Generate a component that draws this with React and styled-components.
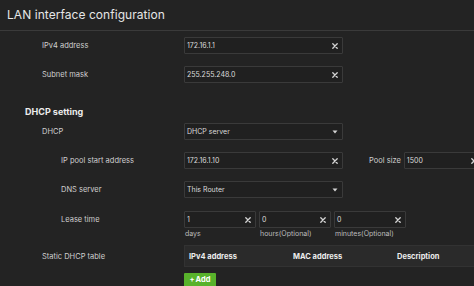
import React from "react";
import styled, { createGlobalStyle } from "styled-components";

const Global = createGlobalStyle`
  html, body { margin: 0; padding: 0; background: #232323; overflow: hidden; }
  body { font-family: "Inter", "Lato", sans-serif; color: #d6d6d6; }
  * { box-sizing: border-box; }
`;

const Page = styled.div`
  width: 474px;
  height: 286px;
  background: #232323;
  overflow: hidden;
`;

const Header = styled.div`
  height: 31px;
  border-bottom: 1px solid #3a3a3a;
  display: flex;
  align-items: center;
  padding: 0 0 2px 7px;
`;

const Title = styled.h1`
  margin: 0;
  font-size: 12px;
  font-weight: 400;
  color: #e6e6e6;
  letter-spacing: 0.05px;
`;

const Form = styled.div`
  display: flex;
  flex-direction: column;
  padding-top: 6px;
`;

const Row = styled.div`
  display: grid;
  grid-template-columns: 184px auto;
  align-items: start;
  margin-top: ${(p) => p.$mt || 0}px;
`;

const Label = styled.div`
  padding-left: ${(p) => (p.$indent ? 61 : 42)}px;
  height: ${(p) => p.$h || 17}px;
  display: flex;
  align-items: center;
  font-size: 7.5px;
  color: #cfcfcf;
  white-space: nowrap;
`;

const Section = styled.div`
  margin-top: 22px;
  padding-left: 25px;
  height: 13px;
  line-height: 13px;
  font-size: 9px;
  font-weight: 700;
  color: #ececec;
`;

const Fields = styled.div`
  display: flex;
  align-items: ${(p) => (p.$top ? "flex-start" : "center")};
  gap: ${(p) => p.$gap || 0}px;
`;

const Box = styled.div`
  width: ${(p) => p.$w}px;
  height: 17px;
  flex: none;
  border: 1px solid #3a3a3a;
  background: #202020;
  border-radius: 1px;
  display: flex;
  align-items: center;
  justify-content: space-between;
  padding: 0 4px 0 2px;
  font-size: 7px;
  color: #dcdcdc;
`;

const Field = styled.div`
  display: flex;
  flex-direction: column;
  gap: 1px;
`;

const Caption = styled.div`
  font-size: 7px;
  color: #bdbdbd;
  line-height: 9px;
  padding-left: 1px;
`;

const SideLabel = styled.span`
  font-size: 7.5px;
  color: #cfcfcf;
  white-space: nowrap;
  flex: none;
  margin-left: 26px;
  margin-right: 3px;
`;

const Table = styled.div`
  width: 320px;
`;

const THead = styled.div`
  display: grid;
  grid-template-columns: 104px 104px 1fr;
  height: 22px;
  align-items: center;
  background: #2a2a2a;
  border: 1px solid #323232;
  padding-left: 4px;
  font-size: 7.5px;
  font-weight: 700;
  color: #ededed;
`;

const AddButton = styled.button`
  margin-top: 6px;
  width: 32px;
  height: 16px;
  border: none;
  border-radius: 1px;
  background: #58b22b;
  color: #ffffff;
  font-family: inherit;
  font-size: 7.5px;
  font-weight: 700;
  padding: 0 0 3px;
  display: flex;
  align-items: center;
  justify-content: center;
  gap: 1px;
`;

const ClearIcon = () => (
  <svg width="6" height="6" viewBox="0 0 6 6">
    <path d="M0.8 0.8 L5.2 5.2 M5.2 0.8 L0.8 5.2" stroke="#d4d4d4" strokeWidth="1.3" strokeLinecap="round" />
  </svg>
);

const Caret = () => (
  <svg width="6" height="4" viewBox="0 0 6 4">
    <path d="M0.5 0.5 L5.5 0.5 L3 3.5 Z" fill="#d4d4d4" />
  </svg>
);

const TextInput = ({ value, w = 159 }) => (
  <Box $w={w}>
    <span>{value}</span>
    <ClearIcon />
  </Box>
);

const Select = ({ value }) => (
  <Box $w={159}>
    <span>{value}</span>
    <Caret />
  </Box>
);

export default function App() {
  return (
    <Page>
      <Global />
      <Header>
        <Title>LAN interface configuration</Title>
      </Header>
      <Form>
        <Row>
          <Label>IPv4 address</Label>
          <TextInput value="172.16.1.1" />
        </Row>
        <Row $mt={12}>
          <Label>Subnet mask</Label>
          <TextInput value="255.255.248.0" />
        </Row>
        <Section>DHCP setting</Section>
        <Row $mt={5}>
          <Label>DHCP</Label>
          <Select value="DHCP server" />
        </Row>
        <Row $mt={12}>
          <Label $indent>IP pool start address</Label>
          <Fields>
            <TextInput value="172.16.1.10" />
            <SideLabel>Pool size</SideLabel>
            <TextInput value="1500" w={78} />
          </Fields>
        </Row>
        <Row $mt={12}>
          <Label $indent>DNS server</Label>
          <Select value="This Router" />
        </Row>
        <Row $mt={13}>
          <Label $indent>Lease time</Label>
          <Fields $top $gap={3}>
            <Field>
              <TextInput value="1" w={72} />
              <Caption>days</Caption>
            </Field>
            <Field>
              <TextInput value="0" w={72} />
              <Caption>hours(Optional)</Caption>
            </Field>
            <Field>
              <TextInput value="0" w={72} />
              <Caption>minutes(Optional)</Caption>
            </Field>
          </Fields>
        </Row>
        <Row $mt={7}>
          <Label $h={22}>Static DHCP table</Label>
          <Table>
            <THead>
              <span>IPv4 address</span>
              <span>MAC address</span>
              <span>Description</span>
            </THead>
            <AddButton>
              <span>+</span>
              <span>Add</span>
            </AddButton>
          </Table>
        </Row>
      </Form>
    </Page>
  );
}
